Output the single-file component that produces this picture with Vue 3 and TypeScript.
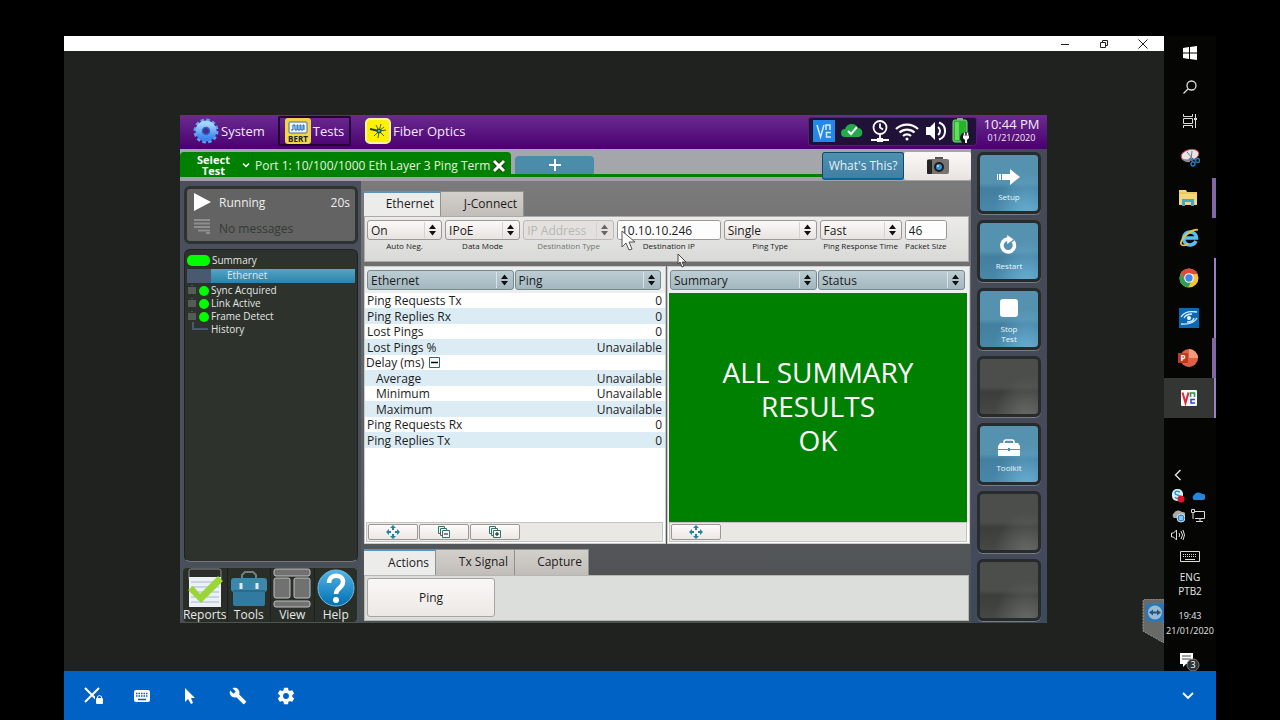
<script setup lang="ts">
import { ref } from 'vue'

interface Param { id: string; label: string; value: string; kind: 'select' | 'input'; disabled?: boolean }
interface Row { name: string; value: string; kind?: 'group' | 'child' }

const params = ref<Param[]>([
  { id: 'neg', label: 'Auto Neg.', value: 'On', kind: 'select' },
  { id: 'mode', label: 'Data Mode', value: 'IPoE', kind: 'select' },
  { id: 'dtype', label: 'Destination Type', value: 'IP Address', kind: 'select', disabled: true },
  { id: 'dip', label: 'Destination IP', value: '10.10.10.246', kind: 'input' },
  { id: 'ptype', label: 'Ping Type', value: 'Single', kind: 'select' },
  { id: 'resp', label: 'Ping Response Time', value: 'Fast', kind: 'select' },
  { id: 'size', label: 'Packet Size', value: '46', kind: 'input' },
])

const rows: Row[] = [
  { name: 'Ping Requests Tx', value: '0' },
  { name: 'Ping Replies Rx', value: '0' },
  { name: 'Lost Pings', value: '0' },
  { name: 'Lost Pings %', value: 'Unavailable' },
  { name: 'Delay (ms)', value: '', kind: 'group' },
  { name: 'Average', value: 'Unavailable', kind: 'child' },
  { name: 'Minimum', value: 'Unavailable', kind: 'child' },
  { name: 'Maximum', value: 'Unavailable', kind: 'child' },
  { name: 'Ping Requests Rx', value: '0' },
  { name: 'Ping Replies Tx', value: '0' },
]

const leds = ['Sync Acquired', 'Link Active', 'Frame Detect']
const side = ['Setup', 'Restart', 'Stop Test', '', 'Toolkit', '', '']
</script>

<template>
  <div class="stage">
    <div class="desktop">
      <section class="remote">
        <header class="titlebar">
          <button aria-label="Minimize"><svg width="10" height="10"><path d="M1 5.5h8" /></svg></button>
          <button aria-label="Restore"><svg width="10" height="10"><path d="M1.500 3.500h5v5h-5zM3.500 3.500v-2h5v5h-2" /></svg></button>
          <button aria-label="Close"><svg width="10" height="10"><path d="M.5.5l9 9M9.500.5l-9 9" /></svg></button>
        </header>

        <main class="device">
          <nav class="topbar">
            <button class="top-item system">
              <svg width="26" height="26" viewBox="0 0 26 26">
                <defs><linearGradient id="gear" x2="0" y2="1"><stop stop-color="#a5d5ff" /><stop offset="1" stop-color="#3a86ec" /></linearGradient></defs>
                <circle cx="13" cy="13" r="10.500" fill="none" stroke="#5fa4f2" stroke-width="4" stroke-dasharray="3.300 2.200" />
                <circle cx="13" cy="13" r="7" fill="none" stroke="url(#gear)" stroke-width="7" />
                <circle cx="13" cy="13" r="3.500" fill="#4d2a8c" stroke="#2767c9" stroke-width="1.500" />
              </svg>
              System
            </button>
            <button class="top-item tests">
              <svg width="26" height="26" viewBox="0 0 26 26">
                <rect width="26" height="26" rx="3" fill="#f0d649" />
                <rect x="4" y="4" width="18" height="11" rx="1" fill="#eef6ff" stroke="#5a6a86" />
                <path d="M6 12h2V7h2v5h2V7h1v5h2V7h1v5h2V7h1v5" fill="none" stroke="#1467bd" />
                <text x="13" y="24" text-anchor="middle" font-size="8" font-weight="700" fill="#222">BERT</text>
              </svg>
              Tests
            </button>
            <button class="top-item fiber">
              <svg width="26" height="26" viewBox="0 0 26 26">
                <rect x="1" y="1" width="24" height="24" rx="4" fill="#fdf000" stroke="#f8f3a0" stroke-width="2" />
                <path d="M5 11l9 2" stroke="#27420f" stroke-width="2" />
                <path d="M14 13l7-1M14 13l5 5M14 13l-1 7M14 13l-5 5M14 13l-3-6M14 13l2-7M14 13l5-4" stroke="#4c6210" fill="none" />
                <circle cx="14" cy="13" r="2.500" fill="#155f57" /><circle cx="14" cy="13" r="1" fill="#38d3e0" />
              </svg>
              Fiber Optics
            </button>
            <div class="tray">
              <svg width="22" height="22" viewBox="0 0 22 22"><rect width="22" height="22" fill="#2388e8" /><path d="M4 5l3.500 12L11 5M13 10V5h4v5M18 12.500h-4.500V17H18" fill="none" stroke="#d6eaff" stroke-width="1.500" /></svg>
              <svg width="24" height="22" viewBox="0 0 24 22"><path d="M5 17a4 4 0 010-8 7 7 0 0113-1 4.600 4.600 0 011 9z" fill="#22ab48" /><path d="M8 11l3 3 6-7" fill="none" stroke="#fff" stroke-width="2" /></svg>
              <svg width="20" height="22" viewBox="0 0 20 22" fill="none" stroke="#fff" stroke-width="1.800"><circle cx="10" cy="7.500" r="6.500" /><path d="M10 3.500v4l3 2M10 14v5M1 20h18" /><path d="M7 18h6v4H7z" fill="#fff" stroke="none" /></svg>
              <svg width="24" height="22" viewBox="0 0 24 22" fill="none" stroke="#fff" stroke-width="2.300"><path d="M1 9a16 16 0 0122 0M4.500 12.500a11 11 0 0115 0M8 16a6 6 0 018 0" /><circle cx="12" cy="19" r="1.500" fill="#fff" stroke="none" /></svg>
              <svg width="22" height="22" viewBox="0 0 22 22"><path d="M1 7h4l5-5v18l-5-5H1z" fill="#fff" /><path d="M13 7a5 5 0 010 8M14 2.500a9 9 0 010 17" fill="none" stroke="#fff" stroke-width="2" /></svg>
              <svg width="20" height="26" viewBox="0 0 20 26"><rect x="5" y="0" width="6" height="4" fill="#9a9ba5" /><rect x="1" y="2" width="14" height="22" rx="2" fill="#25b52b" stroke="#93c794" /><path d="M3 4h4v18H3z" fill="#6ad95f" /><circle cx="14" cy="20" r="6" fill="#171523" /><path d="M12.500 14.500v3M15.500 14.500v3" stroke="#fff" stroke-width="1.500" /><path d="M11 17.500h6v2.500l-2 2v3h-2v-3l-2-2z" fill="#fff" /></svg>
            </div>
            <div class="clock"><b>10:44 PM</b><small>01/21/2020</small></div>
          </nav>

          <div class="below">
            <div class="work">
              <div class="testbar">
                <div class="green-tab">
                  <button class="select-test"><span>Select<br>Test</span><svg width="8" height="6"><path d="M1 1.500l3 3 3-3" fill="none" stroke="#fff" stroke-width="1.500" /></svg></button>
                  <span class="test-name">Port 1: 10/100/1000 Eth Layer 3 Ping Term</span>
                  <button class="close" aria-label="Close test"><svg width="14" height="14"><path d="M2 2l10 10M12 2L2 12" stroke="#14440d" stroke-width="5" /><path d="M2 2l10 10M12 2L2 12" stroke="#fff" stroke-width="3" /></svg></button>
                </div>
                <button class="add-tab" aria-label="Add test"><svg width="12" height="12"><path d="M6 0v12M0 6h12" stroke="#fff" stroke-width="2" /></svg></button>
                <div class="bar-tools">
                  <button class="whats">What's This?</button>
                  <button class="camera" aria-label="Screenshot">
                    <svg width="22" height="18" viewBox="0 0 22 18"><path d="M8 0h8v3H8z" fill="#555" /><rect x="0" y="2" width="22" height="15" rx="2" fill="#77736f" /><rect x="0" y="3" width="5" height="14" rx="1" fill="#242424" /><circle cx="12" cy="10" r="5" fill="#1b1b1b" /><circle cx="12" cy="10" r="3" fill="#3892df" /><circle cx="11" cy="9" r="1" fill="#c6e6ff" /></svg>
                  </button>
                </div>
              </div>

              <div class="body">
                <aside class="left">
                  <div class="status">
                    <div class="run"><svg width="20" height="20"><path d="M1 1v18l17-9z" fill="#fff" /></svg><span>Running</span><time>20s</time></div>
                    <div class="run none"><svg width="20" height="18"><path d="M1 1h16M1 4.500h16M1 8h16M5 11.500h12M13 14h4" stroke="#8e8e8e" stroke-width="2" /></svg><span>No messages</span></div>
                  </div>
                  <div class="tree">
                    <div class="t-row head"><i class="pill"></i>Summary</div>
                    <div class="t-row eth"><span>Ethernet</span></div>
                    <div v-for="l in leds" :key="l" class="t-row led"><i class="node"></i><i class="dot"></i>{{ l }}</div>
                    <div class="t-row led"><i class="elbow"></i>History</div>
                  </div>
                  <nav class="dock">
                    <button>
                      <svg width="38" height="40" viewBox="0 0 38 40"><rect x="3" y="1" width="32" height="12" rx="2" fill="#2b2d2c" stroke="#8b8e8b" /><path d="M3 9h32v30H3z" fill="#eef1f3" /><path d="M5 14h28M5 19h28M5 24h28M5 29h28M5 34h28" stroke="#9cb9d8" /><path d="M2 22l5-4 7 8L32 8l5 5-22 22z" fill="#9bd636" /></svg>
                      Reports
                    </button>
                    <button>
                      <svg width="38" height="40" viewBox="0 0 38 40"><path d="M12 11V7l3-3h8l3 3v4" fill="none" stroke="#70807c" stroke-width="2" /><rect x="1" y="10" width="36" height="14" rx="3" fill="#3c88ac" /><path d="M3 22h32v14q0 2-2 2H5q-2 0-2-2z" fill="#327a9f" /><path d="M3 23h32" stroke="#225b78" /><path d="M11 15v6M27 15v6" stroke="#e6e9e9" stroke-width="3" /></svg>
                      Tools
                    </button>
                    <button>
                      <svg width="38" height="40" viewBox="0 0 38 40" fill="#717171" stroke="#c0c2c0"><rect x="1" y="1" width="36" height="7" rx="2" /><rect x="1" y="10" width="16" height="20" rx="2" /><rect x="21" y="10" width="16" height="20" rx="2" /><rect x="1" y="33" width="36" height="6" rx="2" /></svg>
                      View
                    </button>
                    <button>
                      <svg width="38" height="40" viewBox="0 0 38 40"><defs><linearGradient id="help" x2="0" y2="1"><stop stop-color="#54b4e6" /><stop offset="1" stop-color="#006fb2" /></linearGradient></defs><circle cx="19" cy="20" r="18" fill="url(#help)" stroke="#72bde2" /><path d="M12 15c0-10 15-9 14-1 0 6-7 6-7 12" fill="none" stroke="#fff" stroke-width="4.500" /><circle cx="19" cy="32" r="3" fill="#fff" /></svg>
                      Help
                    </button>
                  </nav>
                </aside>

                <div class="content">
                  <div class="tabs setup-tabs"><button class="on">Ethernet</button><button>J-Connect</button></div>
                  <div class="params">
                    <div v-for="p in params" :key="p.id" class="field">
                      <div class="combo" :class="{ off: p.disabled }">
                        <template v-if="p.kind === 'select'">
                          <select :id="p.id" v-model="p.value" :disabled="p.disabled"><option>{{ p.value }}</option></select>
                          <svg class="spin" width="17" height="16"><path class="line" d="M.5 0v16" /><path d="M5 7l3.500-4.500L12 7zM5 9l3.500 4.500L12 9z" /></svg>
                        </template>
                        <input v-else :id="p.id" v-model="p.value" type="text">
                      </div>
                      <label :for="p.id">{{ p.label }}</label>
                    </div>
                  </div>

                  <div class="results">
                    <section class="pane">
                      <div class="heads">
                        <div v-for="h in ['Ethernet', 'Ping']" :key="h" class="combo blue">
                          <select :aria-label="h"><option>{{ h }}</option></select>
                          <svg class="spin" width="17" height="16"><path class="line" d="M.5 0v16" /><path d="M5 7l3.500-4.500L12 7zM5 9l3.500 4.500L12 9z" /></svg>
                        </div>
                      </div>
                      <div class="table-wrap">
                        <table>
                          <tbody>
                            <tr v-for="r in rows" :key="r.name" :class="r.kind">
                              <th scope="row">{{ r.name }}<button v-if="r.kind === 'group'" class="fold" aria-label="Collapse"><svg width="11" height="11"><path d="M.5.5h10v10H.5z" fill="#fff" stroke="#35675f" /><path d="M2 5.500h7" stroke="#000" stroke-width="1.500" /></svg></button></th>
                              <td>{{ r.value }}</td>
                            </tr>
                          </tbody>
                        </table>
                      </div>
                      <div class="foot">
                        <button aria-label="Expand"><svg width="14" height="14" fill="#23859a"><path d="M7 0l3 3H8v2H6V3H4zM7 14l-3-3h2V9h2v2h2zM0 7l3-3v2h2v2H3v2zM14 7l-3 3V8H9V6h2V4z" /></svg></button>
                        <button aria-label="Collapse all"><svg width="12" height="12" fill="#f3f6f4" stroke="#34736a"><path d="M.5.5h6v7h-6z" /><path d="M2.500 2.500h6v7h-6z" /><path d="M4.500 4.500h7v7h-7z" /><path d="M6 8h4" stroke="#111" /></svg></button>
                        <button aria-label="Expand all"><svg width="12" height="12" fill="#f3f6f4" stroke="#34736a"><path d="M.5.5h6v7h-6z" /><path d="M2.500 2.500h6v7h-6z" /><path d="M4.500 4.500h7v7h-7z" /><path d="M6 8h4M8 6v4" stroke="#111" /></svg></button>
                      </div>
                    </section>
                    <section class="pane">
                      <div class="heads">
                        <div v-for="h in ['Summary', 'Status']" :key="h" class="combo blue">
                          <select :aria-label="h"><option>{{ h }}</option></select>
                          <svg class="spin" width="17" height="16"><path class="line" d="M.5 0v16" /><path d="M5 7l3.500-4.500L12 7zM5 9l3.500 4.500L12 9z" /></svg>
                        </div>
                      </div>
                      <div class="ok">ALL SUMMARY<br>RESULTS<br>OK</div>
                      <div class="foot">
                        <button aria-label="Expand"><svg width="14" height="14" fill="#23859a"><path d="M7 0l3 3H8v2H6V3H4zM7 14l-3-3h2V9h2v2h2zM0 7l3-3v2h2v2H3v2zM14 7l-3 3V8H9V6h2V4z" /></svg></button>
                      </div>
                    </section>
                  </div>

                  <div class="tabs action-tabs"><button class="on">Actions</button><button>Tx Signal</button><button>Capture</button></div>
                  <div class="actions"><button>Ping</button></div>
                </div>
              </div>
            </div>

            <aside class="side">
              <button v-for="(s, i) in side" :key="i" :class="{ empty: !s }" :disabled="!s">
                <svg v-if="s === 'Setup'" width="26" height="18"><path d="M1 6h1v6H1zM3 6h2v6H3zM6 6h8V1l10 8-10 8v-5H6z" fill="#fff" /></svg>
                <svg v-else-if="s === 'Restart'" width="20" height="20" viewBox="0 0 22 22"><path d="M15.500 7a7 7 0 11-6-2.500" fill="none" stroke="#fff" stroke-width="4" /><path d="M9 0l7 5-7 5z" fill="#fff" /></svg>
                <svg v-else-if="s === 'Stop Test'" width="20" height="20"><rect x="1" y="1" width="18" height="18" rx="3" fill="#fff" /></svg>
                <svg v-else-if="s === 'Toolkit'" width="24" height="18"><path d="M7 5V3q0-2 2-2h6q2 0 2 2v2" fill="none" stroke="#fff" stroke-width="1.500" /><path d="M3 4h18l2 3v3H1V7zM1 11h22v6H1z" fill="#fff" /><path d="M11 9h2v3h-2z" fill="#4c8baa" /></svg>
                <span v-if="s" :class="{ two: s === 'Stop Test' }">{{ s }}</span>
              </button>
            </aside>
          </div>
          <svg class="cursor big" width="16" height="22" viewBox="0 0 16 22"><path d="M1 1v16l4-4 3 7 3-1-3-7h6z" fill="#fff" stroke="#555" /></svg>
          <svg class="cursor small" width="10" height="15" viewBox="0 0 10 15"><path d="M1 1v10l2-2 2 5 2-1-2-4h4z" fill="#fff" stroke="#444" /></svg>
        </main>

        <svg class="viewer-tab" width="22" height="44" viewBox="0 0 22 44"><path d="M22 0H4Q1 0 1 3v29l21 12z" fill="#686a69" stroke="#999" stroke-dasharray="2 1" /><rect x="4" y="5" width="18" height="17" fill="#2878b8" /><circle cx="13" cy="13.500" r="7" fill="#9bb9cf" /><path d="M7 13.500l4-3v2h4v-2l4 3-4 3v-2h-4v2z" fill="#24557c" /></svg>
      </section>

      <aside class="taskbar">
        <div class="sys">
          <button aria-label="Start"><svg width="14" height="14" fill="#fff"><path d="M0 2l6-1v5.500H0zM7 1l7-1v6.500H7zM0 7.500h6V13l-6-1zM7 7.500h7V14l-7-1z" /></svg></button>
          <button aria-label="Search"><svg width="14" height="14" fill="none" stroke="#ddd" stroke-width="1.300"><circle cx="8.500" cy="5.500" r="4.500" /><path d="M5 9l-4.500 4.500" /></svg></button>
          <button aria-label="Task view"><svg width="14" height="14" fill="none" stroke="#ddd"><path d="M.5 0v2.500h9V0M.5 14v-2.500h9V14M.5 4.500h9v5h-9zM12.500 0v14" /><path d="M11 4h3v2h-3z" fill="#ddd" stroke="none" /></svg></button>
        </div>
        <div class="apps">
          <button aria-label="Snipping"><svg width="20" height="20"><ellipse cx="10" cy="7" rx="9" ry="5.500" transform="rotate(-14 10 7)" fill="#e6e4e6" stroke="#c53f5b" /><path d="M1 10q5 3 9 0v4q-6 1-9-4z" fill="#888" /><path d="M7 4l6 7M12 3l-1 8" stroke="#777" /><g fill="none" stroke="#2777b6" stroke-width="1.500"><circle cx="13" cy="16" r="2" /><circle cx="17.500" cy="12.500" r="2" /><path d="M10 10l3 4M12 11l4 1" /></g></svg></button>
          <button class="open wide" aria-label="Explorer"><svg width="20" height="18"><path d="M1 1h7l1 2h10v13H1z" fill="#f6d778" /><path d="M1 4h18" stroke="#e3b949" /><path d="M4 10h12v7h-3v-4H7v4H4z" fill="#36a9df" /></svg></button>
          <button aria-label="Internet Explorer"><svg width="22" height="20"><path d="M17 13a6.500 6.500 0 11.500-3H6" fill="none" stroke="#55c2f5" stroke-width="3.500" /><path d="M3 17C-2 14 12 0 19 2M3 17q3 1 6-1" fill="none" stroke="#f1c22f" stroke-width="1.800" /></svg></button>
          <button class="open" aria-label="Chrome"><svg width="20" height="20"><circle cx="10" cy="10" r="9.500" fill="#f4c534" /><path d="M1.800 5.250A9.500 9.500 0 0118.500 6H10l-4 6z" fill="#dc4a3d" /><path d="M1.800 5.250A9.500 9.500 0 009 19.500L13.500 12 6 12z" fill="#2fa052" /><circle cx="10" cy="10" r="4.800" fill="#fff" /><circle cx="10" cy="10" r="3.700" fill="#4385ed" /></svg></button>
          <button class="open" aria-label="Viewer"><svg width="20" height="20"><rect width="20" height="20" fill="#0a69b4" /><path d="M2 9q4-7 16-5M2 16q12 1 16-6M5 10q2-4 8-4M8 14q6 0 7-4" fill="none" stroke="#d9efff" stroke-width="1.300" /><circle cx="10" cy="10" r="2" fill="#fff" /></svg></button>
          <button class="open wide" aria-label="PowerPoint"><svg width="20" height="20"><circle cx="11" cy="10" r="9" fill="#df6145" /><path d="M11 1a9 9 0 019 9h-9z" fill="#f29a7d" /><rect x="0" y="5" width="10" height="10" fill="#bd3a20" /><text x="5" y="13" text-anchor="middle" font-size="8" font-weight="700" fill="#fff">P</text></svg></button>
          <button class="open active" aria-label="VNC Viewer"><svg width="16" height="16"><rect width="16" height="16" rx="1" fill="#f7f7f7" /><path d="M1.500 2.500L4.500 13l3-10.500" fill="none" stroke="#d92b3d" stroke-width="2" /><path d="M9.500 7V3h4v4" fill="none" stroke="#249552" stroke-width="1.500" /><path d="M14 9.500h-4V13h4" fill="none" stroke="#304ac0" stroke-width="1.500" /></svg></button>
        </div>
        <div class="notify">
          <button class="up" aria-label="Hidden icons"><svg width="8" height="12"><path d="M6.500 1L1.500 6l5 5" fill="none" stroke="#ddd" stroke-width="1.500" /></svg></button>
          <div class="icons">
            <svg width="14" height="14"><rect x="1" y="0" width="11" height="12" rx="5" fill="#dceffa" /><path d="M9 3Q4 1 4 4c0 3 5 1 5 4 0 2-4 2-5 0" fill="none" stroke="#209cd9" stroke-width="1.500" /><circle cx="10" cy="10" r="3.500" fill="#dc1830" /></svg>
            <svg width="14" height="14"><path d="M3 11a3 3 0 010-5 5 5 0 018-1 3 3 0 011 6z" fill="#2388dc" /></svg>
            <svg width="14" height="14"><path d="M3 9a3 3 0 010-5 5 5 0 018-1 3 3 0 011 6z" fill="#aaa" /><circle cx="10" cy="9" r="4" fill="#2583cc" stroke="#ddd" /><path d="M8 8h4M8 10h4" stroke="#fff" /></svg>
            <svg width="14" height="14" fill="none" stroke="#ddd"><path d="M4 2.500h9.500v7H4M.5.5h3v3h-3zM2 4v6M9 10v2M5 12.500h7" /></svg>
            <svg width="14" height="12" fill="none" stroke="#ddd"><path d="M.5 4h2l3-3v10l-3-3h-2zM8 4q1.500 2 0 4M10 2q3 4 0 8M12 1q3 5 0 10" /></svg>
          </div>
          <svg class="kb" width="20" height="12" fill="none" stroke="#ddd"><path d="M.5.5h19v10H.5z" /><path d="M3 3.500h14M3 5.500h14" stroke-dasharray="1 1" /><path d="M5 8.500h10" /></svg>
          <p>ENG<br>PTB2</p>
          <p class="when">19:43<br>21/01/2020</p>
          <button class="bell" aria-label="3 notifications"><svg width="22" height="18"><path d="M1 0h13v11H7l-3 3v-3H1z" fill="#fff" /><path d="M3 3h9M3 6h9" stroke="#444" /><circle cx="14" cy="12" r="6" fill="#333" stroke="#777" /><text x="14" y="15" text-anchor="middle" font-size="9" fill="#fff">3</text></svg></button>
        </div>
      </aside>
    </div>

    <footer class="toolbar">
      <button aria-label="Disconnect"><svg width="20" height="18"><path d="M1 1l14 14M15 1L1 15" stroke="#fff" stroke-width="2" /><rect x="11" y="8" width="9" height="10" fill="#0062c4" /><rect x="12" y="11" width="7" height="6" rx="1" fill="#fff" /><path d="M13.500 11V9.500q2-2 4 0V11" fill="none" stroke="#fff" /></svg></button>
      <button aria-label="Keyboard"><svg width="18" height="14"><rect x="1" y="1" width="16" height="12" rx="2" fill="#fff" /><path d="M3 4.500h12M3 7h12" stroke="#0062c4" stroke-width="1.500" stroke-dasharray="1.500 1" /><path d="M5 10.500h8" stroke="#0062c4" stroke-width="1.500" /></svg></button>
      <button aria-label="Pointer"><svg width="14" height="18"><path d="M2 1v14l3-3 3 5 2-1-2-5h4z" fill="#fff" /></svg></button>
      <button aria-label="Tools"><svg width="18" height="18" viewBox="0 0 24 24"><path d="M22.700 19l-9.100-9.100c.9-2.300.4-5-1.500-6.900-2-2-5-2.400-7.400-1.300L9 6 6 9 1.600 4.700C.4 7.100.9 10.100 2.900 12.100c1.900 1.900 4.600 2.400 6.900 1.500l9.100 9.100c.4.4 1 .4 1.400 0l2.300-2.300c.5-.4.5-1.100.1-1.400z" fill="#fff" /></svg></button>
      <button aria-label="Settings"><svg width="20" height="20" viewBox="0 0 24 24"><path d="M19.430 12.980c.04-.32.07-.64.07-.98s-.03-.66-.07-.98l2.110-1.650a.5.5 0 00.12-.64l-2-3.460a.5.5 0 00-.61-.22l-2.490 1a7.300 7.300 0 00-1.690-.98l-.38-2.650A.5.5 0 0014 2h-4a.5.5 0 00-.49.420l-.38 2.650c-.61.250-1.170.590-1.690.98l-2.490-1a.5.5 0 00-.61.220l-2 3.460a.5.5 0 00.12.64l2.110 1.650a8 8 0 000 1.960l-2.110 1.650a.5.5 0 00-.12.64l2 3.460c.12.220.39.300.61.220l2.490-1c.52.400 1.080.730 1.690.98l.38 2.650c.03.240.240.420.49.420h4c.250 0 .460-.180.490-.420l.38-2.650a7.300 7.300 0 001.690-.98l2.490 1c.230.080.490 0 .610-.220l2-3.460a.5.5 0 00-.12-.64zM12 15.500a3.500 3.500 0 110-7 3.500 3.500 0 010 7z" fill="#fff" /></svg></button>
      <button class="hide" aria-label="Hide toolbar"><svg width="12" height="8"><path d="M1 1l5 5 5-5" fill="none" stroke="#fff" stroke-width="1.800" /></svg></button>
    </footer>
  </div>
</template>

<style>
body { margin: 0; background: #000; }
</style>

<style scoped>
* { box-sizing: border-box; }
button, select, input { font: inherit; color: inherit; margin: 0; padding: 0; border: 0; background: none; border-radius: 0; }
button { display: flex; align-items: center; justify-content: center; cursor: pointer; }
svg { flex: none; display: block; }
.stage { min-height: 100vh; padding: 36px 5% 0; display: flex; flex-direction: column; background: #000; font: 12px/15px "Open Sans", "Noto Sans", sans-serif; color: #1c1c1c; }
.desktop { flex: 1; display: flex; }
.remote { flex: 1; min-width: 0; position: relative; display: flex; flex-direction: column; background: #20221f; }
.titlebar { height: 15px; background: #fff; display: flex; justify-content: flex-end; padding-right: 2px; }
.titlebar button { width: 39px; }
.titlebar svg { fill: none; stroke: #222; }
.device { flex: 1; margin: 64px 117px 48px 116px; position: relative; display: flex; flex-direction: column; background: #4b505b; }

.topbar { height: 34px; display: flex; align-items: center; background: linear-gradient(#6a2b90, #4a0070); color: #f2eaf6; padding: 0 5px 2px 0; }
.top-item { gap: 2px; height: 30px; font-size: 13px; }
.system { padding-left: 13px; width: 98px; justify-content: flex-start; }
.tests { width: 73px; border: 2px solid #21032f; border-radius: 2px; }
.fiber { margin-left: 14px; }
.tray { margin-left: auto; height: 29px; width: 169px; display: flex; align-items: center; justify-content: space-between; padding: 0 4px; background: #201139; border: 1px solid #522078; border-radius: 3px; }
.clock { width: 61px; margin-left: 4px; text-align: center; line-height: 13px; }
.clock b { display: block; font-weight: 400; font-size: 13px; }
.clock small { display: block; font-size: 9px; }

.below { flex: 1; display: flex; }
.work { flex: 1; min-width: 0; display: flex; flex-direction: column; }
.testbar { height: 32px; padding-top: 3px; display: flex; background: linear-gradient(#a5a6ab 25px, #008000 25px, #008000 28px, #9fa3a8 28px); }
.green-tab { height: 25px; background: #008000; border-radius: 4px 4px 0 0; color: #e6f4e2; display: flex; align-items: center; width: 331px; }
.select-test { flex: none; width: 73px; padding-left: 15px; gap: 12px; font-weight: 700; font-size: 11px; line-height: 11px; color: #fff; border-right: 1px solid #06720a; height: 25px; }
.test-name { padding: 2px 0 0 2px; white-space: nowrap; }
.close { width: 18px; height: 25px; padding-top: 2px; }
.add-tab { width: 79px; height: 18px; margin: 4px 0 0 4px; background: #4b8cab; border-radius: 4px 4px 0 0; }
.bar-tools { margin-left: auto; display: flex; height: 28px; }
.whats { width: 82px; background: linear-gradient(#4e91b0, #417fa4); color: #e4f1f6; border: 1px solid #14486a; border-bottom: 2px solid #0065a0; border-radius: 3px; }
.camera { width: 67px; background: linear-gradient(#faf8f6, #e9e4e0); border-radius: 2px; }

.body { flex: 1; display: flex; }
.left { width: 181px; padding: 5px 3px 0 4px; display: flex; flex-direction: column; gap: 5px; background: #4a505b; }
.status { height: 58px; border: 3px solid #2e3230; border-radius: 6px; background: #636363; color: #eee; padding: 0 5px 0 6px; }
.run { display: flex; align-items: center; height: 26px; }
.run span { margin-left: 6px; }
.run time { margin-left: auto; }
.none { color: #333a34; }
.tree { flex: 1; background: #2d322c; border: 1px solid #222; border-bottom-color: #777; border-radius: 6px; padding: 3px 2px; font-size: 10px; color: #e2e5e2; }
.t-row { height: 13px; display: flex; align-items: center; line-height: 13px; }
.head { height: 15px; }
.pill { width: 23px; height: 11px; border-radius: 5px; background: #00fd00; margin-right: 2px; }
.eth { background: #485970; padding-left: 24px; height: 14px; margin: 1px 0; }
.eth span { flex: 1; height: 14px; padding-left: 16px; background: linear-gradient(#55a5c6, #2c82a8); }
.led { padding-left: 1px; }
.node { width: 8px; height: 7px; background: #535c55; box-shadow: 0 -5px 0 -3px #47586f; margin-right: 3px; }
.dot { width: 10px; height: 10px; border-radius: 50%; background: #00fd00; margin-right: 2px; }
.elbow { width: 16px; height: 8px; margin: -7px 3px 0 4px; border: solid #47586f; border-width: 0 0 2px 2px; }
.dock { height: 56px; margin-left: -2px; display: grid; grid-template-columns: repeat(4, 1fr); background: #292e29; border: 1px solid #4d544f; border-radius: 5px; color: #e8e8e8; }
.dock button { min-width: 0; flex-direction: column; line-height: 14px; justify-content: flex-end; border-left: 1px solid #1c201c; }
.dock button:first-child { border-left: 0; }

.content { flex: 1; min-width: 0; padding: 10px 1px 2px 3px; display: flex; flex-direction: column; background: linear-gradient(#7b7b7b, #6e6e6e 20%, #505355 90%, #4a504d); }
.tabs { display: flex; height: 26px; }
.tabs button { padding: 0 6px 2px 16px; justify-content: flex-end; background: linear-gradient(#d3d0cc, #c2bdb8); border: solid #8f9090; border-width: 1px 1px 0 0; }
.tabs .on { background: #ececeb; border-top: 2px solid #5c93bc; }
.setup-tabs { height: 25px; }
.setup-tabs button { width: 83px; }
.setup-tabs .on { width: 77px; }
.params { height: 46px; display: grid; grid-template-columns: 76fr 76fr 92fr 105fr 94fr 83fr 43fr; gap: 3px; padding: 3px 21px 0 2px; background: linear-gradient(#ecebea, #d9dad8); border: 1px solid #aaa; margin-right: 1px; }
.field { min-width: 0; text-align: center; }
.field label { display: block; font-size: 8px; line-height: 12px; white-space: nowrap; }
.combo { position: relative; height: 20px; border: 1px solid #9b9896; border-radius: 3px; background: linear-gradient(#fbf9f8, #e8e3e0); }
.combo select, .combo input { appearance: none; width: 100%; height: 18px; padding: 0 0 0 3px; outline: 0; display: block; }
.combo input { background: #fdfdfd; border-radius: 2px; }
.spin { position: absolute; right: 0; top: 1px; pointer-events: none; fill: #111; }
.spin .line { stroke: #d5d1cf; }
.off { color: #b5b8b2; border-color: #bbb; background: #e3e0de; }
.off select { opacity: 1; }
.off .spin { fill: #666; }
.field:has(.off) label { color: #6d756c; }

.results { flex: 1; margin-top: 4px; display: grid; grid-template-columns: 302fr 303fr; gap: 1px; }
.pane { min-width: 0; background: #fff; border: 1px solid #c9ccca; display: flex; flex-direction: column; padding-bottom: 1px; }
.heads { height: 26px; display: grid; grid-template-columns: 1fr 1fr; gap: 1px; padding: 3px 4px 0 2px; background: #edefee; }
.blue { background: linear-gradient(#becdd4, #a3b7bf); border-color: #77898f; }
.blue .line { stroke: #dce3e6; }
.table-wrap { flex: 1; }
table { width: 100%; border-collapse: collapse; }
tr { height: 15px; }
tr:nth-child(even) { height: 16px; background: #dcecf4; }
th, td { padding: 0 3px 0 2px; line-height: 15px; font-weight: 400; text-align: left; }
td { text-align: right; }
.group th { padding-left: 1px; }
.child th { padding-left: 11px; }
.fold { display: inline-flex; vertical-align: -1px; margin-left: 5px; }
.foot { height: 20px; display: flex; gap: 1px; padding: 1px; margin: 0 2px 0 1px; background: #eae8e4; border: 1px solid #c5c4c0; }
.foot button { width: 50px; height: 16px; border: 1px solid #9b9896; border-radius: 2px; background: linear-gradient(#fdfbfa, #ece7e4); }
.ok { flex: 1; margin: 0 2px 0 1px; padding-bottom: 3px; background: #008000; color: #fff; font-size: 28px; line-height: 34px; display: flex; flex-direction: column; justify-content: center; text-align: center; }
.action-tabs { margin-top: 5px; }
.action-tabs button { width: 74px; }
.action-tabs .on { width: 72px; }
.action-tabs button:nth-child(2) { width: 79px; }
.actions { height: 46px; padding: 2px; background: #dcdedc; border: 1px solid #b4b6b4; margin-right: 1px; }
.actions button { width: 128px; height: 39px; border: 1px solid #a7a4a1; border-radius: 3px; background: linear-gradient(#faf8f7, #ece8e5); }

.side { width: 76px; padding: 3px 6px 2px; display: flex; flex-direction: column; gap: 6px; background: linear-gradient(#464a54, #454a5c 80%, #3c4a5c); }
.side button { flex: 1; flex-direction: column; gap: 6px; padding-top: 4px; color: #eef6fa; font-size: 8px; line-height: 10px; border: 3px solid #272b2c; border-radius: 6px; box-shadow: 0 1px 0 #777b80; background: radial-gradient(ellipse at 80% 110%, #69afd4, transparent 50%) padding-box, linear-gradient(#5592b0 50%, #437f9f 60%, #4888a9) padding-box; }
.side .empty { background: radial-gradient(ellipse at 80% 110%, #686c68, transparent 50%) padding-box, linear-gradient(#4b4e4a 50%, #3b3e3a 60%, #454844) padding-box; }
.side .two { width: 20px; text-align: center; }
.cursor { position: absolute; }
.big { left: 441px; top: 115px; }
.small { left: 497px; top: 138px; }
.viewer-tab { position: absolute; right: 0; bottom: 28px; }

.taskbar { width: 52px; display: flex; flex-direction: column; background: #050604; color: #e4e4e4; font-size: 9px; line-height: 15px; }
.taskbar button { width: 100%; }
.sys button { height: 34px; }
.apps button { height: 40px; }
.open { border-right: 2px solid #9b80c6; }
.wide { border-right-width: 4px; border-color: #8265a5; }
.active { background: #343634; }
.notify { margin-top: auto; display: flex; flex-direction: column; align-items: center; }
.taskbar .up { height: 16px; padding-right: 24px; }
.icons { display: grid; grid-template-columns: 14px 14px; gap: 6px; margin: 6px 4px 0 0; }
.kb { margin: 10px 0 7px; }
.notify p { margin: 0; text-align: center; font-size: 10px; line-height: 14px; }
.notify .when { margin-top: 10px; font-size: 9px; line-height: 15px; }
.bell { margin-top: 15px; }

.toolbar { height: 49px; display: flex; align-items: center; background: #0062c4; padding: 0 8px 0 6px; }
.toolbar button { width: 48px; height: 49px; }
.toolbar .hide { width: 40px; margin-left: auto; }
</style>
